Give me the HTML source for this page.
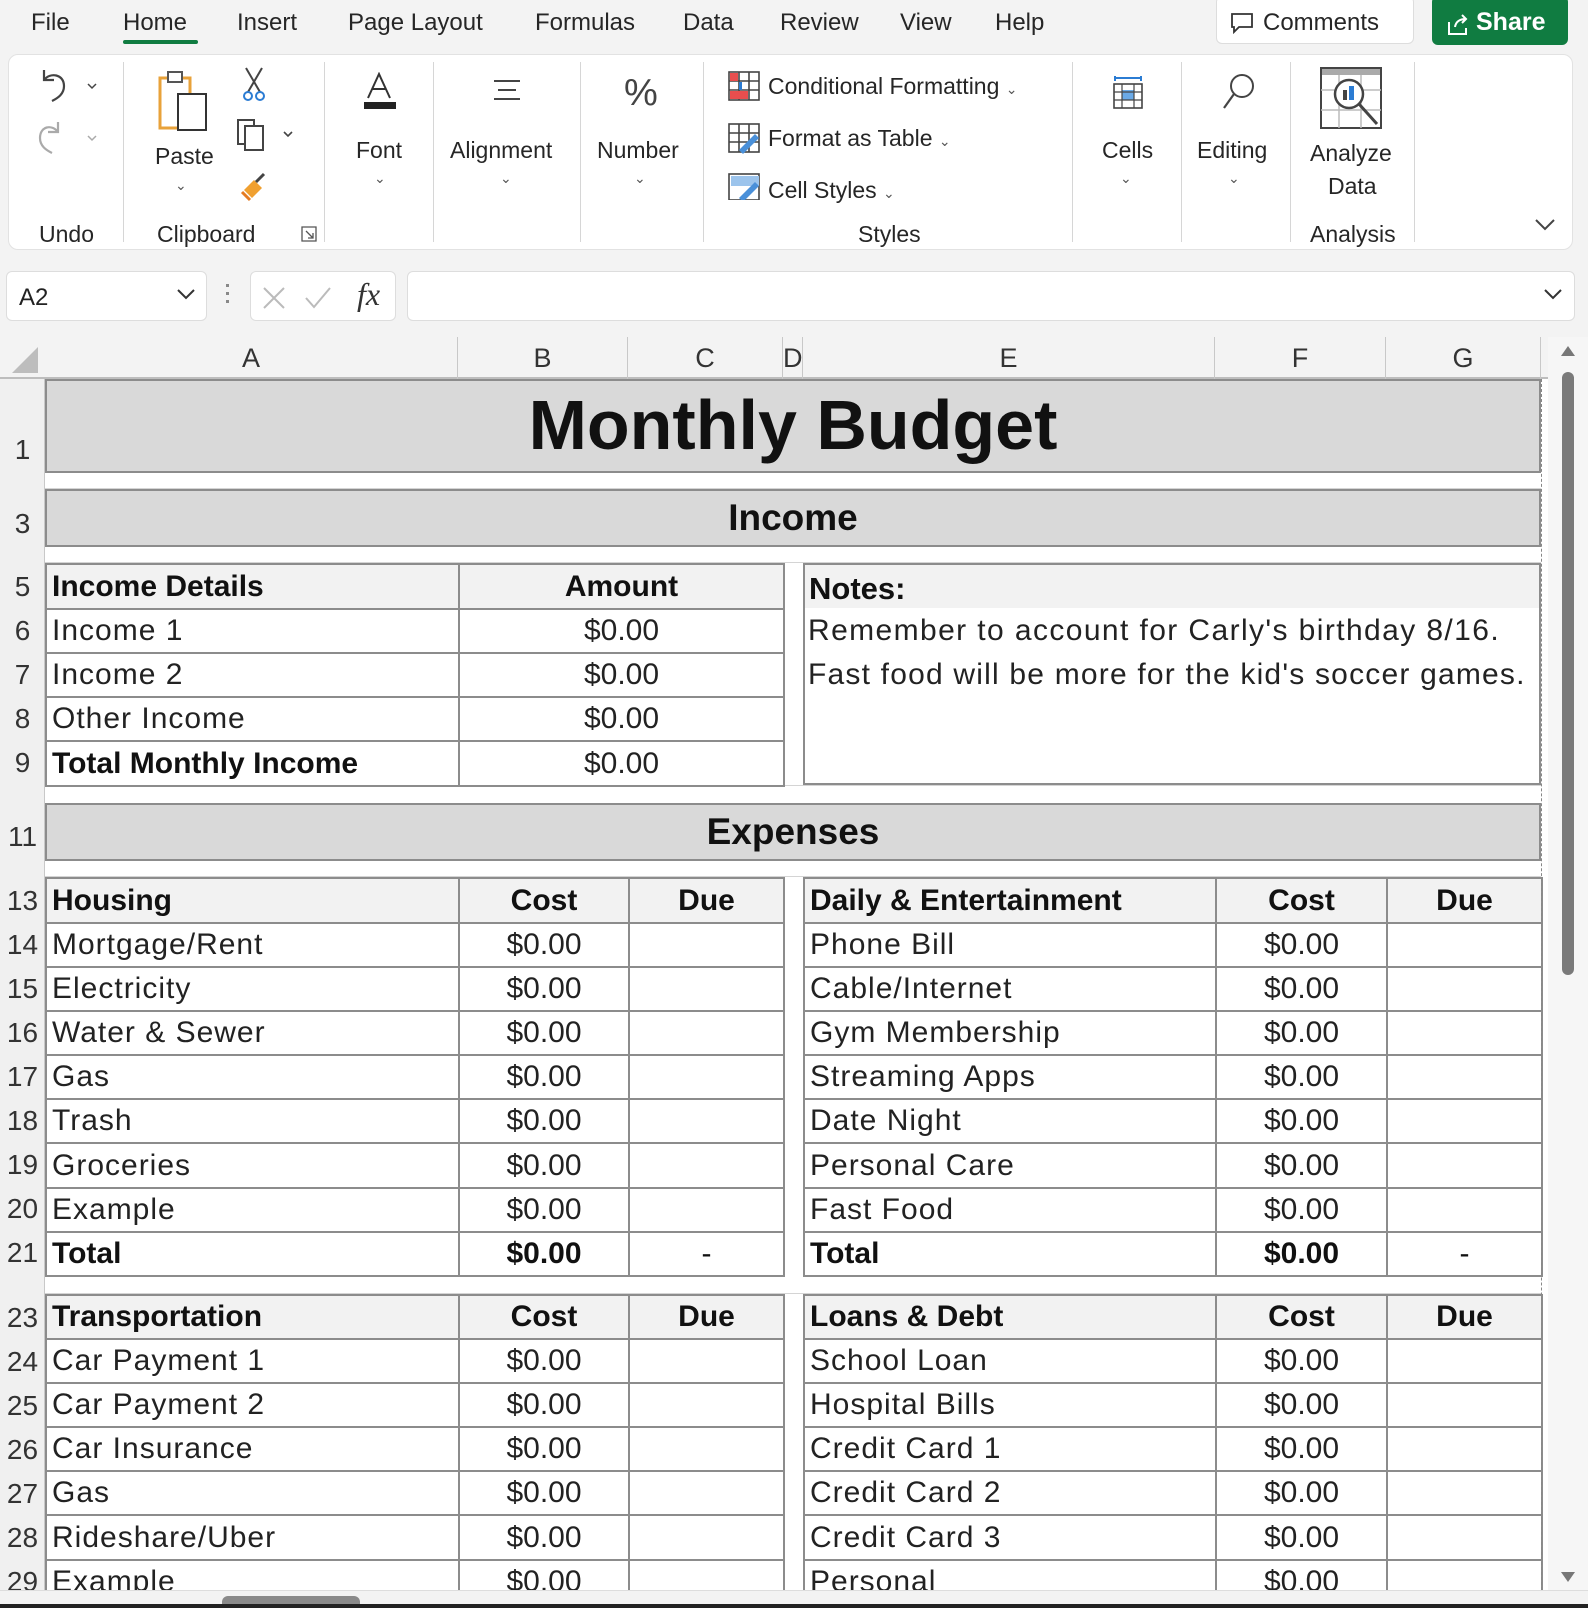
<!DOCTYPE html>
<html><head><meta charset="utf-8">
<style>
*{margin:0;padding:0;box-sizing:border-box}
body{width:1588px;height:1608px;background:#f3f3f3;font-family:"Liberation Sans",sans-serif;color:#222;position:relative;overflow:hidden}
.a{position:absolute;white-space:nowrap}
.rt{font-size:23px;color:#262626}
.sep{position:absolute;top:62px;width:1px;height:180px;background:#d6d6d6}
.chev{font-size:14px;color:#555}
table{position:absolute;border-collapse:collapse;table-layout:fixed;font-size:30px;color:#222}
td{border:2px solid #8c8c8c;padding:0 5px;white-space:nowrap;overflow:visible;line-height:1;letter-spacing:1px}
tr.h td{background:#f2f2f2;font-weight:bold;color:#111;letter-spacing:0}
td.m{text-align:center;letter-spacing:0}
tr.t td{font-weight:bold;color:#111;letter-spacing:0}
.rn{position:absolute;left:0;width:45px;text-align:center;font-size:28px;color:#333;line-height:1}
.bar{position:absolute;left:45px;width:1496px;background:#d9d9d9;border:2px solid #8c8c8c;font-weight:bold;color:#111;text-align:center}
.ch{position:absolute;top:337px;height:42px;border-right:1px solid #c8c8c8;text-align:center;font-size:27px;line-height:42px;color:#333}
</style></head><body>
<!-- tabs -->
<div class="a rt" style="left:31px;top:9px;font-size:24px">File</div>
<div class="a rt" style="left:123px;top:9px;font-size:24px">Home</div>
<div class="a" style="left:123px;top:40px;width:75px;height:4px;background:#107c41;border-radius:2px"></div>
<div class="a rt" style="left:237px;top:9px;font-size:24px">Insert</div>
<div class="a rt" style="left:348px;top:9px;font-size:24px">Page Layout</div>
<div class="a rt" style="left:535px;top:9px;font-size:24px">Formulas</div>
<div class="a rt" style="left:683px;top:9px;font-size:24px">Data</div>
<div class="a rt" style="left:780px;top:9px;font-size:24px">Review</div>
<div class="a rt" style="left:900px;top:9px;font-size:24px">View</div>
<div class="a rt" style="left:995px;top:9px;font-size:24px">Help</div>
<div class="a rt" style="left:1216px;top:-4px;width:198px;height:48px;background:#fff;border:1px solid #ddd;border-radius:6px;font-size:24px;padding:12px 0 0 46px">Comments</div>
<svg class="a" style="left:1230px;top:12px" width="24" height="22"><path d="M2 2h20v13H9l-5 5v-5H2z" fill="none" stroke="#333" stroke-width="1.8"/></svg>
<div class="a" style="left:1432px;top:-4px;width:136px;height:49px;background:#107c41;border-radius:6px;color:#fff;font-weight:bold;font-size:25px;padding:12px 0 0 44px">Share</div>
<svg class="a" style="left:1446px;top:12px" width="24" height="24"><path d="M3 10v12h17v-6M9 15c1-6 5-8 11-8M16 3l4 4-4 4" fill="none" stroke="#fff" stroke-width="2"/></svg>
<!-- ribbon -->
<div class="a" style="left:8px;top:54px;width:1565px;height:196px;background:#fff;border:1px solid #e2e2e2;border-radius:10px"></div>
<div class="sep" style="left:123px"></div><div class="sep" style="left:324px"></div><div class="sep" style="left:433px"></div><div class="sep" style="left:580px"></div><div class="sep" style="left:703px"></div><div class="sep" style="left:1072px"></div><div class="sep" style="left:1181px"></div><div class="sep" style="left:1290px"></div><div class="sep" style="left:1414px"></div>
<svg class="a" style="left:34px;top:66px" width="70" height="90"><path d="M10 4v10h10M10 14C16 6 30 8 30 20c0 8-6 12-12 15" fill="none" stroke="#444" stroke-width="2.2"/><path d="M54 18l4 4 4-4" fill="none" stroke="#444" stroke-width="1.5"/><path d="M24 56v10H14M24 66C18 58 6 60 6 72c0 8 6 12 12 15" fill="none" stroke="#aaa" stroke-width="2.2"/><path d="M54 70l4 4 4-4" fill="none" stroke="#aaa" stroke-width="1.5"/></svg>
<div class="a rt" style="left:39px;top:221px">Undo</div>
<svg class="a" style="left:156px;top:70px" width="64" height="64"><rect x="4" y="8" width="30" height="50" fill="none" stroke="#e8a23a" stroke-width="3"/><rect x="12" y="2" width="14" height="10" fill="#fff" stroke="#555" stroke-width="2"/><rect x="22" y="24" width="28" height="36" fill="#fff" stroke="#333" stroke-width="2"/></svg>
<div class="a rt" style="left:155px;top:143px">Paste</div>
<div class="a chev" style="left:175px;top:177px">&#8964;</div>
<svg class="a" style="left:240px;top:66px" width="30" height="36"><path d="M6 2l14 24M22 2L8 26" stroke="#444" stroke-width="2"/><circle cx="8" cy="30" r="4" fill="none" stroke="#2b7cd3" stroke-width="2"/><circle cx="20" cy="30" r="4" fill="none" stroke="#2b7cd3" stroke-width="2"/></svg>
<svg class="a" style="left:236px;top:118px" width="60" height="34"><rect x="2" y="2" width="16" height="24" fill="none" stroke="#444" stroke-width="2"/><rect x="9" y="8" width="18" height="24" fill="#fff" stroke="#444" stroke-width="2"/><path d="M48 14l4 4 4-4" fill="none" stroke="#444" stroke-width="1.6"/></svg>
<svg class="a" style="left:236px;top:170px" width="34" height="34"><path d="M8 20l10-10 8 8-10 10z" fill="#f0a030"/><path d="M20 12l8-8" stroke="#444" stroke-width="3"/><path d="M6 22l8 8" stroke="#e57b22" stroke-width="3"/></svg>
<div class="a rt" style="left:157px;top:221px">Clipboard</div>
<svg class="a" style="left:301px;top:226px" width="16" height="16"><path d="M1 1h14v14H1z M5 5l7 7M12 7v5H7" fill="none" stroke="#555" stroke-width="1.3"/></svg>
<svg class="a" style="left:362px;top:72px" width="36" height="40"><path d="M6 26L17 2l11 24M10 17h14" fill="none" stroke="#333" stroke-width="2"/><rect x="2" y="30" width="32" height="7" fill="#222"/></svg>
<div class="a rt" style="left:356px;top:137px">Font</div><div class="a chev" style="left:374px;top:170px">&#8964;</div>
<svg class="a" style="left:492px;top:78px" width="30" height="28"><path d="M2 3h26M6 12h18M2 21h26" stroke="#444" stroke-width="2"/></svg>
<div class="a rt" style="left:450px;top:137px">Alignment</div><div class="a chev" style="left:500px;top:170px">&#8964;</div>
<div class="a" style="left:624px;top:72px;font-size:38px;color:#444">%</div>
<div class="a rt" style="left:597px;top:137px">Number</div><div class="a chev" style="left:634px;top:170px">&#8964;</div>
<svg class="a" style="left:727px;top:70px" width="34" height="130"><g fill="none" stroke="#444" stroke-width="1.6"><rect x="2" y="2" width="30" height="28"/><path d="M2 11h30M2 20h30M12 2v28M22 2v28"/><rect x="2" y="54" width="30" height="28"/><path d="M2 63h30M2 72h30M12 54v28M22 54v28"/><rect x="2" y="104" width="30" height="26"/></g><rect x="3" y="3" width="8" height="8" fill="#e84e4e"/><rect x="3" y="21" width="18" height="8" fill="#e84e4e"/><rect x="12" y="12" width="3" height="8" fill="#2b7cd3"/><path d="M12 80l16-16 4 4-16 16z" fill="#4a90d9"/><path d="M4 106h28v10H4z" fill="#9cc4ec"/><path d="M12 128l16-16 4 4-16 16z" fill="#4a90d9"/></svg>
<div class="a rt" style="left:768px;top:73px">Conditional Formatting <span class="chev">&#8964;</span></div>
<div class="a rt" style="left:768px;top:125px">Format as Table <span class="chev">&#8964;</span></div>
<div class="a rt" style="left:768px;top:177px">Cell Styles <span class="chev">&#8964;</span></div>
<div class="a rt" style="left:858px;top:221px">Styles</div>
<svg class="a" style="left:1111px;top:76px" width="34" height="34"><path d="M4 2h26M4 0v5M30 0v5" stroke="#2b7cd3" stroke-width="2"/><rect x="3" y="8" width="28" height="24" fill="none" stroke="#444" stroke-width="1.6"/><rect x="11" y="14" width="12" height="10" fill="#6aaae8"/><path d="M3 16h28M3 24h28M11 8v24M23 8v24" stroke="#444" stroke-width="1.2"/></svg>
<div class="a rt" style="left:1102px;top:137px">Cells</div><div class="a chev" style="left:1120px;top:170px">&#8964;</div>
<svg class="a" style="left:1220px;top:72px" width="36" height="40"><circle cx="22" cy="14" r="11" fill="none" stroke="#444" stroke-width="2"/><path d="M14 22L4 36" stroke="#444" stroke-width="2.2"/></svg>
<div class="a rt" style="left:1197px;top:137px">Editing</div><div class="a chev" style="left:1228px;top:170px">&#8964;</div>
<svg class="a" style="left:1319px;top:66px" width="66" height="66"><rect x="2" y="2" width="60" height="60" fill="#fff" stroke="#444" stroke-width="2"/><rect x="3" y="3" width="58" height="6" fill="#aaa"/><path d="M2 24h60M2 44h60M20 9v53M42 9v53" stroke="#bbb" stroke-width="1.5"/><circle cx="30" cy="28" r="14" fill="#fff" stroke="#444" stroke-width="2.5"/><rect x="24" y="24" width="4" height="10" fill="#444"/><rect x="30" y="20" width="5" height="14" fill="#2b7cd3"/><path d="M40 38l18 20" stroke="#444" stroke-width="3"/></svg>
<div class="a rt" style="left:1310px;top:140px">Analyze</div>
<div class="a rt" style="left:1328px;top:173px">Data</div>
<div class="a rt" style="left:1310px;top:221px">Analysis</div>
<svg class="a" style="left:1534px;top:218px" width="22" height="14"><path d="M2 2l9 9 9-9" fill="none" stroke="#444" stroke-width="2"/></svg>
<!-- formula bar -->
<div class="a" style="left:6px;top:271px;width:201px;height:50px;background:#fff;border:1px solid #ddd;border-radius:6px;font-size:24px;padding:12px 0 0 12px">A2</div>
<svg class="a" style="left:176px;top:288px" width="20" height="14"><path d="M2 2l8 8 8-8" fill="none" stroke="#333" stroke-width="2"/></svg>
<div class="a" style="left:226px;top:284px;width:3px;height:3px;background:#888;box-shadow:0 8px #888,0 16px #888"></div>
<div class="a" style="left:250px;top:271px;width:146px;height:50px;background:#fff;border:1px solid #ddd;border-radius:6px"></div>
<svg class="a" style="left:260px;top:284px" width="90" height="28"><path d="M4 4l20 20M24 4L4 24" stroke="#bbb" stroke-width="2"/><path d="M46 14l8 9 16-19" fill="none" stroke="#bbb" stroke-width="2"/></svg>
<div class="a" style="left:357px;top:276px;font-family:'Liberation Serif',serif;font-style:italic;font-size:32px;color:#333">fx</div>
<div class="a" style="left:407px;top:271px;width:1168px;height:50px;background:#fff;border:1px solid #ddd;border-radius:6px"></div>
<svg class="a" style="left:1543px;top:288px" width="20" height="14"><path d="M2 2l8 8 8-8" fill="none" stroke="#333" stroke-width="2"/></svg>
<!-- sheet -->
<div class="a" style="left:0;top:337px;width:1588px;height:1271px;background:#fff"></div>
<div class="a" style="left:0;top:337px;width:45px;height:1253px;background:#f0f0f0;border-right:1px solid #c8c8c8"></div>
<div class="a" style="left:0;top:337px;width:1548px;height:42px;background:#f3f3f3;border-bottom:2px solid #bdbdbd"></div>
<svg class="a" style="left:10px;top:345px" width="30" height="30"><path d="M28 2v26H2z" fill="#bdbdbd"/></svg>
<div class="ch" style="left:45px;width:413px">A</div>
<div class="ch" style="left:458px;width:170px">B</div>
<div class="ch" style="left:628px;width:155px">C</div>
<div class="ch" style="left:783px;width:20px;text-align:left">D</div>
<div class="ch" style="left:803px;width:412px">E</div>
<div class="ch" style="left:1215px;width:171px">F</div>
<div class="ch" style="left:1386px;width:155px">G</div>
<!-- row numbers -->
<div class="rn" style="top:436px">1</div>
<div class="rn" style="top:510px">3</div>
<div class="rn" style="top:573px">5</div>
<div class="rn" style="top:617px">6</div>
<div class="rn" style="top:661px">7</div>
<div class="rn" style="top:705px">8</div>
<div class="rn" style="top:749px">9</div>
<div class="rn" style="top:823px">11</div>
<div class="rn" style="top:887px">13</div>
<div class="rn" style="top:931px">14</div>
<div class="rn" style="top:975px">15</div>
<div class="rn" style="top:1019px">16</div>
<div class="rn" style="top:1063px">17</div>
<div class="rn" style="top:1107px">18</div>
<div class="rn" style="top:1151px">19</div>
<div class="rn" style="top:1195px">20</div>
<div class="rn" style="top:1239px">21</div>
<div class="rn" style="top:1304px">23</div>
<div class="rn" style="top:1348px">24</div>
<div class="rn" style="top:1392px">25</div>
<div class="rn" style="top:1436px">26</div>
<div class="rn" style="top:1480px">27</div>
<div class="rn" style="top:1524px">28</div>
<div class="rn" style="top:1568px">29</div>
<!-- small row gridlines -->
<div class="a" style="left:45px;top:472px;width:1496px;height:17px;border-bottom:1px solid #d4d4d4"></div>
<div class="a" style="left:45px;top:546px;width:1496px;height:17px;border-bottom:1px solid #d4d4d4"></div>
<div class="a" style="left:45px;top:785px;width:1496px;height:18px;border-top:1px solid #d4d4d4"></div>
<div class="a" style="left:45px;top:860px;width:1496px;height:17px;border-bottom:1px solid #d4d4d4"></div>
<div class="a" style="left:45px;top:1275px;width:1496px;height:19px;border-bottom:1px solid #d4d4d4"></div>
<!-- bars -->
<div class="bar" style="top:379px;height:94px;font-size:70px;line-height:88px">Monthly Budget</div>
<div class="bar" style="top:489px;height:58px;font-size:37px;line-height:54px">Income</div>
<div class="bar" style="top:803px;height:58px;font-size:37px;line-height:54px">Expenses</div>
<!-- income -->
<table style="left:45px;top:563px;width:738px">
<col style="width:413px"><col style="width:325px">
<tr class="h" style="height:45px"><td>Income Details</td><td class="m">Amount</td></tr>
<tr style="height:44px"><td>Income 1</td><td class="m">$0.00</td></tr>
<tr style="height:44px"><td>Income 2</td><td class="m">$0.00</td></tr>
<tr style="height:44px"><td>Other Income</td><td class="m">$0.00</td></tr>
<tr style="height:45px"><td style="font-weight:bold;color:#111;letter-spacing:0">Total Monthly Income</td><td class="m">$0.00</td></tr>
</table>
<div class="a" style="left:803px;top:563px;width:738px;height:222px;border:2px solid #8c8c8c;background:#fff"></div>
<div class="a" style="left:805px;top:565px;width:734px;height:43px;background:#f2f2f2;font-weight:bold;font-size:31px;padding:6px 0 0 4px;color:#111">Notes:</div>
<div class="a" style="left:808px;top:614px;font-size:30px;letter-spacing:1.4px">Remember to account for Carly's birthday 8/16.</div>
<div class="a" style="left:808px;top:658px;font-size:30px;letter-spacing:1.2px">Fast food will be more for the kid's soccer games.</div>
<!-- housing -->
<table style="left:45px;top:877px;width:738px">
<col style="width:413px"><col style="width:170px"><col style="width:155px">
<tr class="h" style="height:45px"><td>Housing</td><td class="m">Cost</td><td class="m">Due</td></tr>
<tr style="height:44.1px"><td>Mortgage/Rent</td><td class="m">$0.00</td><td></td></tr>
<tr style="height:44.1px"><td>Electricity</td><td class="m">$0.00</td><td></td></tr>
<tr style="height:44.1px"><td>Water &amp; Sewer</td><td class="m">$0.00</td><td></td></tr>
<tr style="height:44.1px"><td>Gas</td><td class="m">$0.00</td><td></td></tr>
<tr style="height:44.1px"><td>Trash</td><td class="m">$0.00</td><td></td></tr>
<tr style="height:44.1px"><td>Groceries</td><td class="m">$0.00</td><td></td></tr>
<tr style="height:44.1px"><td>Example</td><td class="m">$0.00</td><td></td></tr>
<tr class="t" style="height:44.1px"><td>Total</td><td class="m">$0.00</td><td class="m" style="font-weight:normal">-</td></tr>
</table>
<table style="left:803px;top:877px;width:738px">
<col style="width:412px"><col style="width:171px"><col style="width:155px">
<tr class="h" style="height:45px"><td>Daily &amp; Entertainment</td><td class="m">Cost</td><td class="m">Due</td></tr>
<tr style="height:44.1px"><td>Phone Bill</td><td class="m">$0.00</td><td></td></tr>
<tr style="height:44.1px"><td>Cable/Internet</td><td class="m">$0.00</td><td></td></tr>
<tr style="height:44.1px"><td>Gym Membership</td><td class="m">$0.00</td><td></td></tr>
<tr style="height:44.1px"><td>Streaming Apps</td><td class="m">$0.00</td><td></td></tr>
<tr style="height:44.1px"><td>Date Night</td><td class="m">$0.00</td><td></td></tr>
<tr style="height:44.1px"><td>Personal Care</td><td class="m">$0.00</td><td></td></tr>
<tr style="height:44.1px"><td>Fast Food</td><td class="m">$0.00</td><td></td></tr>
<tr class="t" style="height:44.1px"><td>Total</td><td class="m">$0.00</td><td class="m" style="font-weight:normal">-</td></tr>
</table>
<table style="left:45px;top:1294px;width:738px">
<col style="width:413px"><col style="width:170px"><col style="width:155px">
<tr class="h" style="height:44.1px"><td>Transportation</td><td class="m">Cost</td><td class="m">Due</td></tr>
<tr style="height:44.1px"><td>Car Payment 1</td><td class="m">$0.00</td><td></td></tr>
<tr style="height:44.1px"><td>Car Payment 2</td><td class="m">$0.00</td><td></td></tr>
<tr style="height:44.1px"><td>Car Insurance</td><td class="m">$0.00</td><td></td></tr>
<tr style="height:44.1px"><td>Gas</td><td class="m">$0.00</td><td></td></tr>
<tr style="height:44.1px"><td>Rideshare/Uber</td><td class="m">$0.00</td><td></td></tr>
<tr style="height:44.1px"><td>Example</td><td class="m">$0.00</td><td></td></tr>
</table>
<table style="left:803px;top:1294px;width:738px">
<col style="width:412px"><col style="width:171px"><col style="width:155px">
<tr class="h" style="height:44.1px"><td>Loans &amp; Debt</td><td class="m">Cost</td><td class="m">Due</td></tr>
<tr style="height:44.1px"><td>School Loan</td><td class="m">$0.00</td><td></td></tr>
<tr style="height:44.1px"><td>Hospital Bills</td><td class="m">$0.00</td><td></td></tr>
<tr style="height:44.1px"><td>Credit Card 1</td><td class="m">$0.00</td><td></td></tr>
<tr style="height:44.1px"><td>Credit Card 2</td><td class="m">$0.00</td><td></td></tr>
<tr style="height:44.1px"><td>Credit Card 3</td><td class="m">$0.00</td><td></td></tr>
<tr style="height:44.1px"><td>Personal</td><td class="m">$0.00</td><td></td></tr>
</table>
<div class="a" style="left:1541px;top:379px;width:0;height:1211px;border-left:1px dashed #888"></div>
<!-- scrollbars -->
<div class="a" style="left:1548px;top:337px;width:40px;height:1271px;background:#f6f6f6"></div>
<svg class="a" style="left:1560px;top:344px" width="16" height="14"><path d="M8 2l7 10H1z" fill="#777"/></svg>
<div class="a" style="left:1562px;top:372px;width:12px;height:603px;background:#7a7a7a;border-radius:6px"></div>
<svg class="a" style="left:1560px;top:1570px" width="16" height="14"><path d="M8 12l7-10H1z" fill="#777"/></svg>
<div class="a" style="left:0;top:1590px;width:1588px;height:18px;background:#f3f3f3;border-top:1px solid #ddd"></div>
<div class="a" style="left:222px;top:1596px;width:138px;height:12px;background:#8a8a8a;border-radius:6px 6px 0 0"></div>
<div class="a" style="left:0;top:1604px;width:1588px;height:4px;background:#222"></div>
</body></html>
